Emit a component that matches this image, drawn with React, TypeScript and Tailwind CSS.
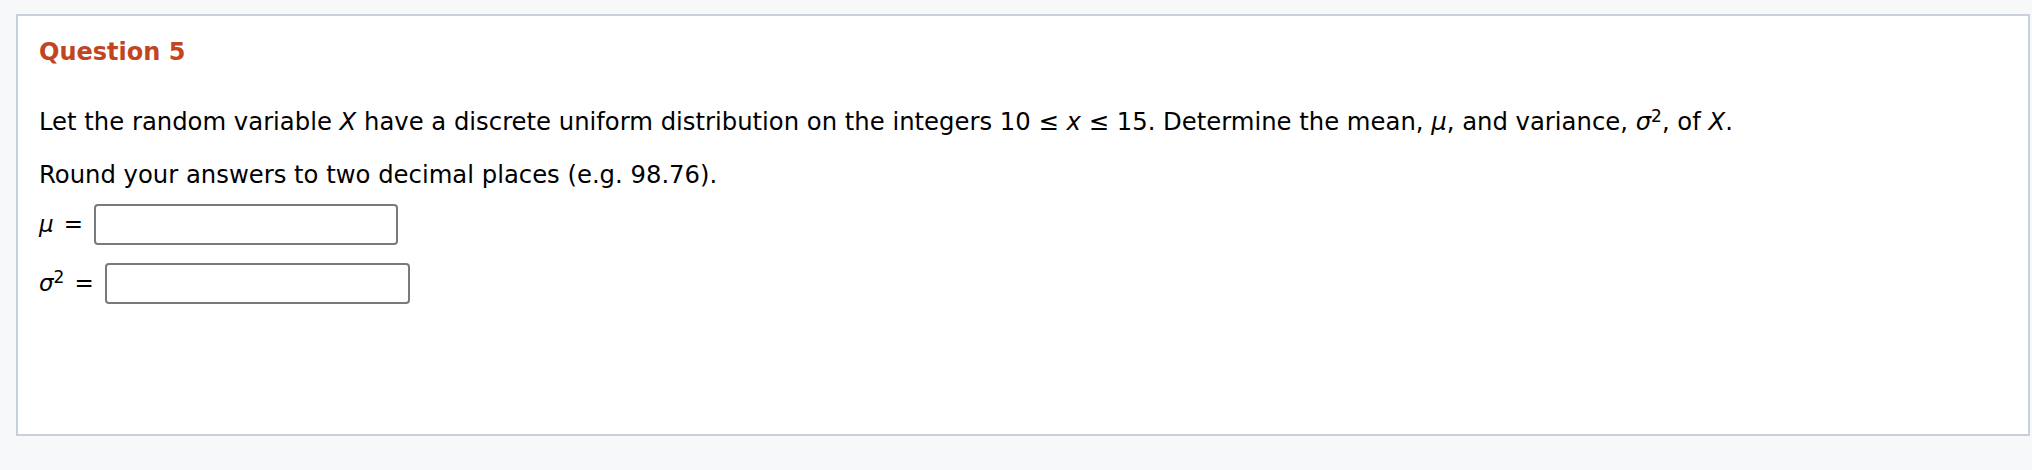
import React from 'react';

const FONT = { fontFamily: '"DejaVu Sans", Verdana, sans-serif' };

function AnswerRow(props: { label: React.ReactNode; inputClass: string }) {
  return (
    <div className="flex h-[41px] items-center">
      <span className="text-[23px] text-black">{props.label}</span>
      <span className="ml-[10px] text-[23px] text-black">=</span>
      <input
        type="text"
        className={`ml-[11px] h-[41px] rounded-[4px] border-2 border-[#7a7a7a] bg-white ${props.inputClass}`}
      />
    </div>
  );
}

export default function App() {
  return (
    <div className="min-h-[470px] bg-[#f7f8fa] pt-[14px] pl-[16px] pr-[2px]" style={FONT}>
      <div className="h-[422px] border-2 border-[#c8d0dc] bg-white pl-[21px] pt-[21px]">
        <h2 className="text-[24px] leading-[30px] font-bold text-[#c1461f]">Question 5</h2>
        <p className="mt-[40px] text-[24.3px] leading-[30px] text-black">
          Let the random variable <i>X</i> have a discrete uniform distribution on the integers 10 ≤{' '}
          <i>x</i> ≤ 15. Determine the mean, <i>μ</i>, and variance, <i>σ</i>
          <sup className="text-[17px]">2</sup>, of <i>X</i>.
        </p>
        <p className="mt-[23px] text-[24.3px] leading-[30px] text-black">
          Round your answers to two decimal places (e.g. 98.76).
        </p>
        <div className="mt-[14px] flex flex-col gap-[18px]">
          <AnswerRow label={<i>μ</i>} inputClass="w-[304px]" />
          <AnswerRow
            label={
              <span>
                <i>σ</i>
                <sup className="text-[17px]">2</sup>
              </span>
            }
            inputClass="w-[305px]"
          />
        </div>
      </div>
    </div>
  );
}
